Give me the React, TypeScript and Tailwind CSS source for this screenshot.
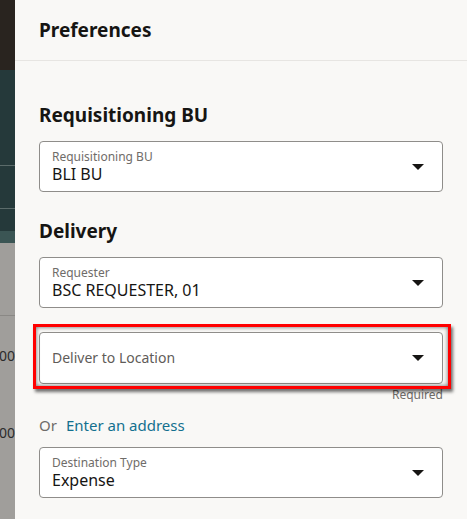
import React from "react";

interface SelectFieldProps {
  label?: string;
  value?: string;
  placeholder?: string;
}

const Caret: React.FC = () => (
  <svg width="12" height="6" viewBox="0 0 12 6" className="shrink-0">
    <path d="M0 0 L12 0 L6 6 Z" fill="#161513" />
  </svg>
);

const SelectField: React.FC<SelectFieldProps> = ({ label, value, placeholder }) => {
  if (placeholder) {
    return (
      <div className="h-[52px] rounded-[4px] border border-[#8f8d8a] bg-white pl-3 pr-[18px] flex items-center justify-between">
        <span className="text-[14px] leading-5 text-[#5f5c59]">{placeholder}</span>
        <Caret />
      </div>
    );
  }
  return (
    <div className="h-[51px] rounded-[4px] border border-[#8f8d8a] bg-white pl-3 pr-[18px] flex items-center justify-between">
      <div className="flex flex-col pt-[1px]">
        <span className="text-[12px] leading-[14px] text-[#6f6c69]">{label}</span>
        <span className="text-[16px] leading-5 text-[#161513]">{value}</span>
      </div>
      <Caret />
    </div>
  );
};

const BackdropStrip: React.FC = () => (
  <div className="w-[15px] shrink-0 flex flex-col overflow-hidden">
    <div className="h-[70px] bg-[#29241f]" />
    <div className="h-[96px] bg-[#25393a] border-b border-[#5b6b6a]" />
    <div className="h-[43px] bg-[#25393a] border-b border-[#5b6b6a]" />
    <div className="h-[22px] bg-[#25393a]" />
    <div className="h-[12px] bg-[#3b5554]" />
    <div className="flex-1 bg-[#a09e9b] flex flex-col">
      <div className="h-[73px] border-b border-[#8a8885]" />
      <div className="h-[50px] flex items-end justify-end text-[14px] leading-5 text-[#2b2b2b] whitespace-nowrap">
        1,000
      </div>
      <div className="h-[77px] flex items-end justify-end text-[14px] leading-5 text-[#2b2b2b] whitespace-nowrap">
        1,000
      </div>
    </div>
  </div>
);

export default function App() {
  return (
    <div className="flex h-[519px] w-[467px] overflow-hidden font-['Noto_Sans',sans-serif]">
      <BackdropStrip />
      <div className="flex-1 bg-[#f9f8f6] flex flex-col">
        <div className="h-[61px] shrink-0 border-b border-[#e7e5e2] px-6 flex items-center">
          <h1 className="text-[19px] leading-7 font-bold text-[#161513]">Preferences</h1>
        </div>
        <div className="px-6">
          <h2 className="mt-[40px] text-[19px] leading-7 font-bold text-[#161513]">Requisitioning BU</h2>
          <div className="mt-[12px]">
            <SelectField label="Requisitioning BU" value="BLI BU" />
          </div>

          <h2 className="mt-[25px] text-[19px] leading-7 font-bold text-[#161513]">Delivery</h2>
          <div className="mt-[12px]">
            <SelectField label="Requester" value="BSC REQUESTER, 01" />
          </div>

          <div className="relative mt-[24px]">
            <SelectField placeholder="Deliver to Location" />
            <div className="pointer-events-none absolute -top-[8px] -left-[6px] -right-[8px] -bottom-[5px] border-[3px] border-[#ff0000] shadow-[2px_3px_3px_rgba(0,0,0,0.55),inset_0_0_4px_rgba(0,0,0,0.6)]" />
          </div>
          <div className="mt-[4px] text-right text-[12px] leading-[14px] text-[#6f6c69]">Required</div>

          <div className="mt-[13px] text-[15px] leading-5">
            <span className="text-[#6f6c69]">Or</span>
            <span className="ml-[9px] text-[#13708f]">Enter an address</span>
          </div>

          <div className="mt-[12px]">
            <SelectField label="Destination Type" value="Expense" />
          </div>
        </div>
      </div>
    </div>
  );
}
